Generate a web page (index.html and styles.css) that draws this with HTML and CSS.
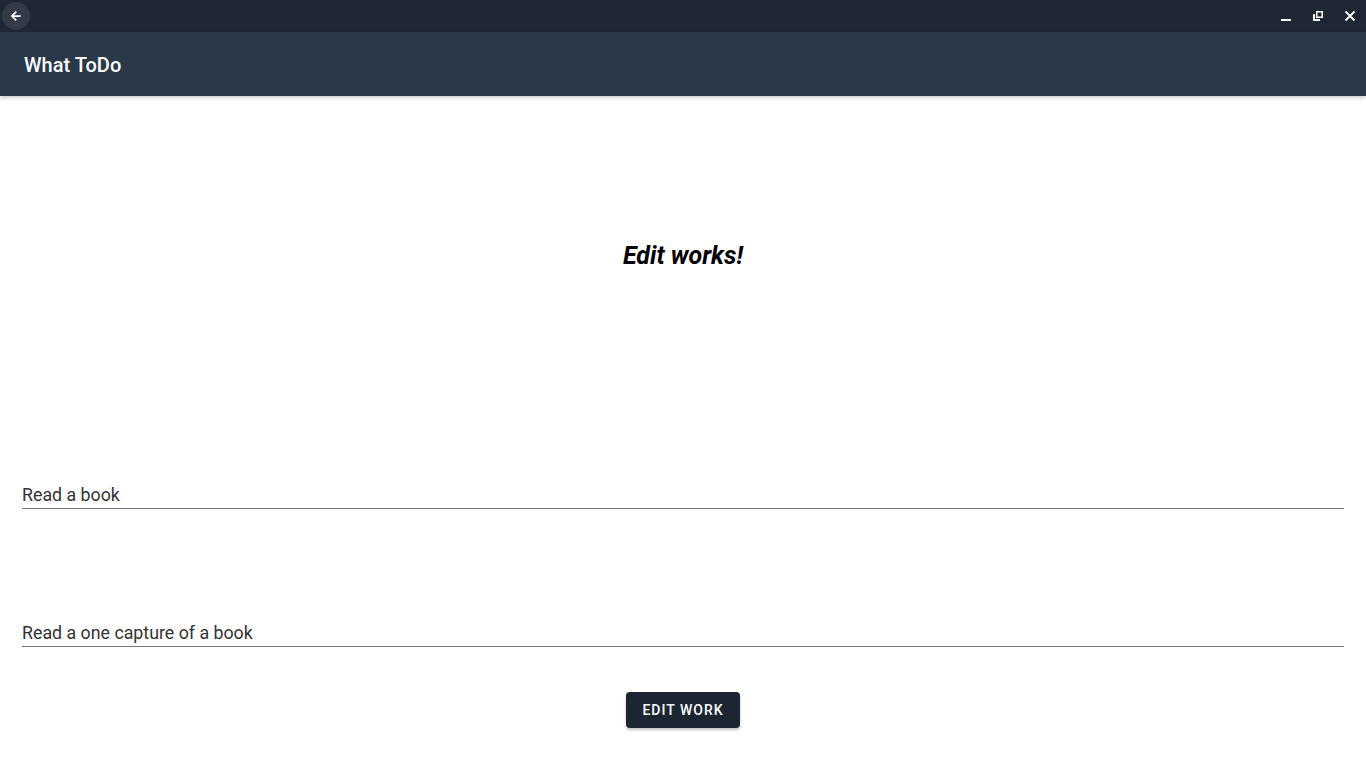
FILE: index.html
```html
<!DOCTYPE html>
<html lang="en">
<head>
    <meta charset="UTF-8">
    <title>What ToDo</title>
    <link rel="stylesheet" href="styles.css">
</head>
<body>
<div class="titlebar">
    <div class="back">
        <svg width="14" height="14" viewBox="0 0 24 24"><path d="M20 10.5H8.5l5-5L11.5 3.5 3 12l8.5 8.5 2-2-5-5H20z" fill="#fff"/></svg>
    </div>
    <div class="winctl">
        <svg width="12" height="12" viewBox="0 0 12 12"><rect x="1" y="9" width="10" height="2" fill="#fff"/></svg>
        <svg width="12" height="12" viewBox="0 0 12 12"><path d="M4 1h7v7H4z M5.5 2.5v4h4v-4z" fill="#fff" fill-rule="evenodd"/><path d="M1 4h2v5h5v2H1z" fill="#fff"/></svg>
        <svg width="12" height="12" viewBox="0 0 12 12"><path d="M1.5 1.5l9 9M10.5 1.5l-9 9" stroke="#fff" stroke-width="1.8"/></svg>
    </div>
</div>
<div class="appbar">What ToDo</div>
<div class="content">
    <h1 class="heading">Edit works!</h1>
    <div class="field first">Read a book</div>
    <div class="field second">Read a one capture of a book</div>
    <div class="actions">
        <button class="btn">EDIT WORK</button>
    </div>
</div>
</body>
</html>
```

FILE: styles.css
```css
body {
    margin: 0;
    padding: 0;
    background: #fff;
    font-family: Roboto, "Liberation Sans", sans-serif;
    height: 768px;
    overflow: hidden;
}
.titlebar {
    height: 32px;
    background: #1e2733;
    display: flex;
    align-items: center;
    justify-content: space-between;
    padding: 0 2px;
}
.back {
    width: 28px;
    height: 28px;
    border-radius: 50%;
    background: #323b47;
    display: flex;
    align-items: center;
    justify-content: center;
}
.winctl {
    display: flex;
    gap: 20px;
    padding-right: 8px;
}
.appbar {
    height: 64px;
    box-sizing: border-box;
    padding-top: 2px;
    background: #29394a;
    color: #fff;
    font-size: 20px;
    font-weight: 500;
    display: flex;
    align-items: center;
    padding-left: 24px;
    box-shadow: 0 2px 4px rgba(0,0,0,0.2);
    position: relative;
}
.content {
    padding: 0 22px;
}
.heading {
    margin: 0;
    padding-top: 145px;
    text-align: center;
    font-size: 25px;
    font-style: italic;
    font-weight: 700;
    color: #000;
    line-height: 30px;
}
.field {
    font-size: 17.8px;
    color: #333;
    border-bottom: 1px solid #777;
    padding-bottom: 3px;
    line-height: 20px;
}
.field.first {
    margin-top: 214px;
}
.field.second {
    margin-top: 114px;
}
.actions {
    display: flex;
    justify-content: center;
    padding-top: 45px;
}
.btn {
    background: #1c2532;
    color: #fff;
    border: none;
    border-radius: 4px;
    height: 36px;
    width: 114px;
    font-family: Roboto, "Liberation Sans", sans-serif;
    font-size: 14px;
    font-weight: 500;
    letter-spacing: 1px;
    box-shadow: 0 2px 3px rgba(0,0,0,0.25);
}
```
